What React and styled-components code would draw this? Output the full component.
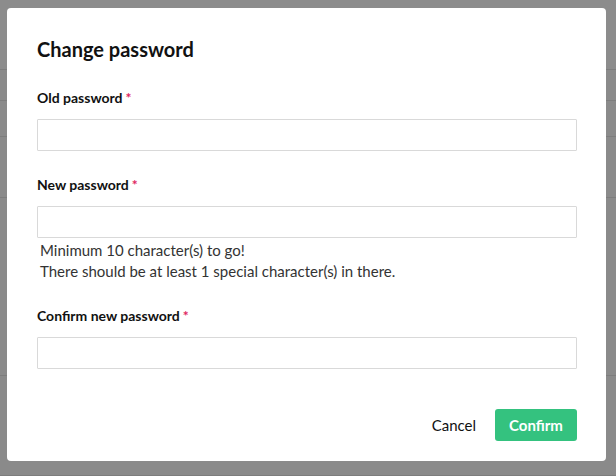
import styled, { createGlobalStyle } from "styled-components";

const GlobalStyle = createGlobalStyle`
  html, body {
    margin: 0;
    padding: 0;
  }
  body {
    font-family: Lato, "Noto Sans", sans-serif;
    background: #ffffff;
    color: #111;
  }
`;

// the page that sits under the dimmed overlay
const rows = [70, 31, 36, 61, 178, 100];

const Page = styled.div`
  display: flex;
  flex-direction: column;
  width: 616px;
  height: 476px;
  overflow: hidden;
`;

const PageRow = styled.div`
  flex: none;
  border-bottom: 1px solid #e4e4e4;
  background: ${({ first }) => (first ? "#ffffff" : "#fcfcfc")};
`;

const Overlay = styled.div`
  position: fixed;
  inset: 0;
  background: rgba(0, 0, 0, 0.45);
  display: flex;
  align-items: flex-start;
  padding: 8px 0 0 7px;
`;

const Modal = styled.div`
  width: 599px;
  height: 453px;
  box-sizing: border-box;
  background: #ffffff;
  border-radius: 4px;
  padding: 27px 29px 20px 30px;
  display: flex;
  flex-direction: column;
`;

const Title = styled.h2`
  margin: 0 0 25px;
  font-size: 20px;
  line-height: 28px;
  font-weight: 700;
  color: #111;
`;

const Field = styled.div`
  display: flex;
  flex-direction: column;
  margin-bottom: ${({ gap }) => gap}px;
`;

const Label = styled.label`
  font-size: 14px;
  line-height: 20px;
  font-weight: 700;
  color: #111;
  margin-bottom: 11px;
`;

const Required = styled.span`
  color: #e0245e;
  margin-left: 3px;
  font-weight: 700;
`;

const Input = styled.input`
  box-sizing: border-box;
  width: 540px;
  height: 32px;
  border: 1px solid #d9d9d9;
  border-radius: 1px;
  padding: 0 10px;
  font-family: inherit;
  font-size: 14px;
  outline: none;
`;

const Hint = styled.div`
  padding: 2px 0 0 3px;
  font-size: 15px;
  line-height: 21px;
  color: #333;
`;

const Footer = styled.div`
  margin-top: auto;
  display: flex;
  justify-content: flex-end;
  align-items: center;
  gap: 19px;
`;

const TextButton = styled.button`
  border: none;
  background: none;
  padding: 0;
  font-family: inherit;
  font-size: 15px;
  color: #111;
  cursor: pointer;
`;

const PrimaryButton = styled.button`
  width: 82px;
  height: 32px;
  border: none;
  border-radius: 3px;
  background: #34c27f;
  color: #fff;
  font-family: inherit;
  font-size: 15px;
  font-weight: 700;
  cursor: pointer;
`;

const PasswordField = ({ label, gap, children }) => (
  <Field gap={gap}>
    <Label>
      {label}
      <Required>*</Required>
    </Label>
    <Input type="password" />
    {children}
  </Field>
);

export default function App() {
  return (
    <>
      <GlobalStyle />
      <Page>
        {rows.map((h, i) => (
          <PageRow key={i} first={i === 0} style={{ height: h - 1 }} />
        ))}
      </Page>
      <Overlay>
        <Modal>
          <Title>Change password</Title>
          <PasswordField label="Old password" gap={24} />
          <PasswordField label="New password" gap={24}>
            <Hint>
              Minimum 10 character(s) to go!
              <br />
              There should be at least 1 special character(s) in there.
            </Hint>
          </PasswordField>
          <PasswordField label="Confirm new password" gap={0} />
          <Footer>
            <TextButton>Cancel</TextButton>
            <PrimaryButton>Confirm</PrimaryButton>
          </Footer>
        </Modal>
      </Overlay>
    </>
  );
}
